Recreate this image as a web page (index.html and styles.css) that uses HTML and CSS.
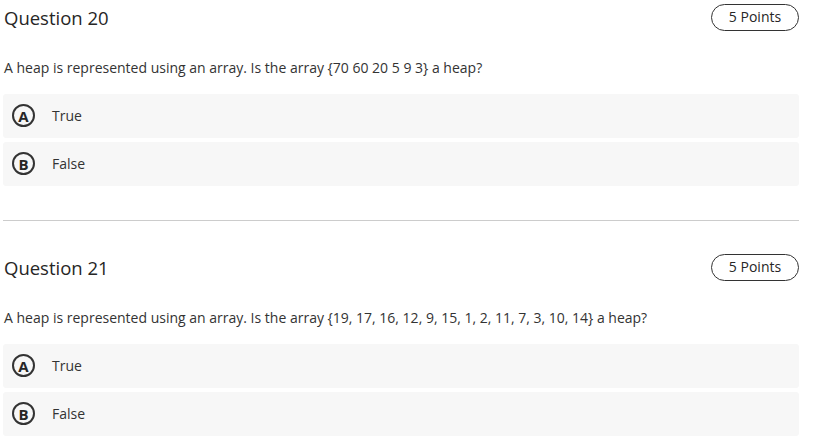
FILE: index.html
```html
<!DOCTYPE html>
<html>
<head>
<meta charset="utf-8">
<link rel="stylesheet" href="styles.css">
</head>
<body>
<div class="page">
  <section class="question">
    <div class="q-header">
      <h2 class="q-title">Question 20</h2>
      <span class="points">5 Points</span>
    </div>
    <p class="prompt">A heap is represented using an array. Is the array {70 60 20 5 9 3} a heap?</p>
    <div class="options">
      <div class="option"><span class="letter">A</span><span class="label">True</span></div>
      <div class="option"><span class="letter">B</span><span class="label">False</span></div>
    </div>
  </section>
  <hr class="divider">
  <section class="question">
    <div class="q-header">
      <h2 class="q-title">Question 21</h2>
      <span class="points">5 Points</span>
    </div>
    <p class="prompt">A heap is represented using an array. Is the array {19, 17, 16, 12, 9, 15, 1, 2, 11, 7, 3, 10, 14} a heap?</p>
    <div class="options">
      <div class="option"><span class="letter">A</span><span class="label">True</span></div>
      <div class="option"><span class="letter">B</span><span class="label">False</span></div>
    </div>
  </section>
</div>
</body>
</html>
```
FILE: styles.css
```css
html, body {
  margin: 0;
  padding: 0;
  background: #ffffff;
}
body {
  font-family: "Open Sans", "Noto Sans", sans-serif;
  color: #333333;
}
.page {
  width: 796px;
  padding-left: 3px;
}
.question {
  padding-top: 4px;
}
.q-header {
  display: flex;
  align-items: center;
  justify-content: space-between;
  height: 27px;
}
.q-title {
  margin: -1px 0 0 1px;
  font-size: 18.5px;
  font-weight: 400;
  color: #262626;
  line-height: 27px;
}
.points {
  box-sizing: border-box;
  height: 27px;
  width: 88px;
  border: 1.5px solid #333333;
  border-radius: 14px;
  font-size: 14px;
  line-height: 24px;
  text-align: center;
  color: #262626;
}
.prompt {
  margin: 27px 0 0 1px;
  font-size: 14px;
  line-height: 20px;
  color: #333333;
}
.options {
  margin-top: 16px;
  display: flex;
  flex-direction: column;
  gap: 4px;
}
.option {
  height: 44px;
  background: #f7f7f7;
  border-radius: 3px;
  display: flex;
  align-items: center;
  padding-left: 9px;
  padding-bottom: 1px;
  box-sizing: border-box;
}
.letter {
  box-sizing: border-box;
  width: 23px;
  height: 23px;
  border: 2px solid #333333;
  border-radius: 50%;
  display: flex;
  align-items: center;
  justify-content: center;
  font-size: 15px;
  font-weight: 700;
  color: #262626;
}
.label {
  margin-left: 17px;
  font-size: 14px;
  color: #333333;
}
.divider {
  margin: 34px 0 29px 0;
  border: 0;
  border-top: 1px solid #cccccc;
  height: 0;
}
```
